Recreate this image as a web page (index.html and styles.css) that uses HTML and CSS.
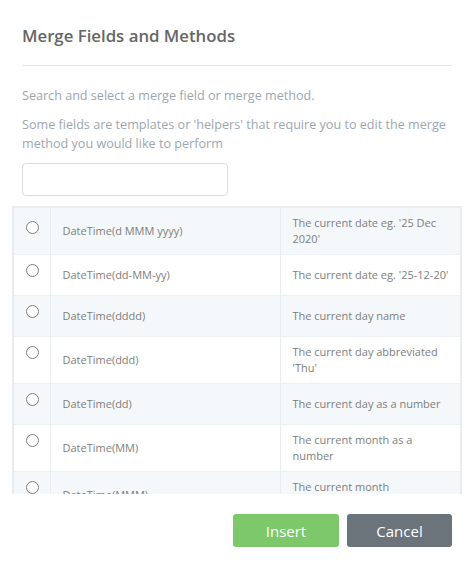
FILE: index.html
```html
<!DOCTYPE html>
<html>
<head>
<meta charset="utf-8">
<link rel="stylesheet" href="styles.css">
</head>
<body>
<div class="modal">
  <div class="modal-header">
    <h4 class="title">Merge Fields and Methods</h4>
  </div>
  <div class="modal-body">
    <p class="hint">Search and select a merge field or merge method.</p>
    <p class="hint">Some fields are templates or 'helpers' that require you to edit the merge method you would like to perform</p>
    <input class="search" type="text">
    <div class="table-wrap">
      <table class="fields">
        <colgroup>
          <col class="c-radio"><col class="c-name"><col class="c-desc">
        </colgroup>
        <tbody>
          <tr><td class="radio-cell"><span class="radio"></span></td><td>DateTime(d MMM yyyy)</td><td>The current date eg. '25 Dec 2020'</td></tr>
          <tr><td class="radio-cell"><span class="radio"></span></td><td>DateTime(dd-MM-yy)</td><td>The current date eg. '25-12-20'</td></tr>
          <tr><td class="radio-cell"><span class="radio"></span></td><td>DateTime(dddd)</td><td>The current day name</td></tr>
          <tr><td class="radio-cell"><span class="radio"></span></td><td>DateTime(ddd)</td><td>The current day abbreviated 'Thu'</td></tr>
          <tr><td class="radio-cell"><span class="radio"></span></td><td>DateTime(dd)</td><td>The current day as a number</td></tr>
          <tr><td class="radio-cell"><span class="radio"></span></td><td>DateTime(MM)</td><td>The current month as a number</td></tr>
          <tr><td class="radio-cell"><span class="radio"></span></td><td>DateTime(MMM)</td><td>The current month abbreviated 'Dec'</td></tr>
        </tbody>
      </table>
    </div>
  </div>
  <div class="modal-footer">
    <button class="btn btn-insert">Insert</button>
    <button class="btn btn-cancel">Cancel</button>
  </div>
</div>
</body>
</html>
```
FILE: styles.css
```css
html, body {
  margin: 0;
  padding: 0;
  background: #ffffff;
}
body {
  font-family: "Open Sans", "Liberation Sans", sans-serif;
  width: 474px;
  height: 570px;
  overflow: hidden;
}
.modal {
  padding: 0 22px;
}
.modal-header {
  padding-top: 24px;
  border-bottom: 1px solid #e5e5e5;
  padding-bottom: 17px;
}
.title {
  margin: 0;
  font-size: 16.8px;
  font-weight: 600;
  line-height: 24px;
  color: #666666;
}
.modal-body {
  padding-top: 20px;
}
.hint {
  margin: 0 0 10px 0;
  font-size: 12.6px;
  line-height: 19px;
  color: #9ca7b0;
}
.search {
  display: block;
  box-sizing: border-box;
  width: 206px;
  height: 33px;
  margin: 0;
  border: 1px solid #dddddd;
  border-radius: 4px;
  background: #fff;
  outline: none;
}
.table-wrap {
  margin: 10px -10px 0;
  height: 288px;
  overflow: hidden;
  border: 2px solid #e9edf0;
  border-bottom: none;
  box-sizing: border-box;
}
.fields {
  width: 100%;
  border-collapse: collapse;
  table-layout: fixed;
  font-size: 11px;
  line-height: 16px;
  color: #7e7e7e;
}
.c-radio { width: 36px; }
.c-name { width: 230px; }
.c-desc { width: auto; }
.fields tr {
  height: 41px;
}
.fields tr:nth-child(odd) {
  background: #f5f8fa;
}
.fields td {
  padding: 7px 10px 7px 12px;
  vertical-align: middle;
  border-left: 1px solid #e9edf0;
  border-top: 1px solid #eef1f3;
}
.fields tr:first-child td {
  border-top: none;
}
.fields td.radio-cell {
  border-left: none;
  vertical-align: top;
  padding: 9px 0 0 12px;
}
.radio {
  display: block;
  width: 11px;
  height: 11px;
  border: 1px solid #7d7d7d;
  border-radius: 50%;
  background: #fff;
}
.fields tr:first-child td.radio-cell {
  padding-top: 13px;
}
.modal-footer {
  display: flex;
  justify-content: flex-end;
  gap: 8px;
  padding-top: 20px;
}
.btn {
  width: 106px;
  height: 33px;
  border: none;
  border-radius: 3px;
  font-family: "Open Sans", "Liberation Sans", sans-serif;
  font-size: 15px;
  color: #ffffff;
  padding: 0;
}
.btn-insert {
  background: #7cc86a;
}
.btn-cancel {
  background: #6b737b;
  width: 105px;
}
```
